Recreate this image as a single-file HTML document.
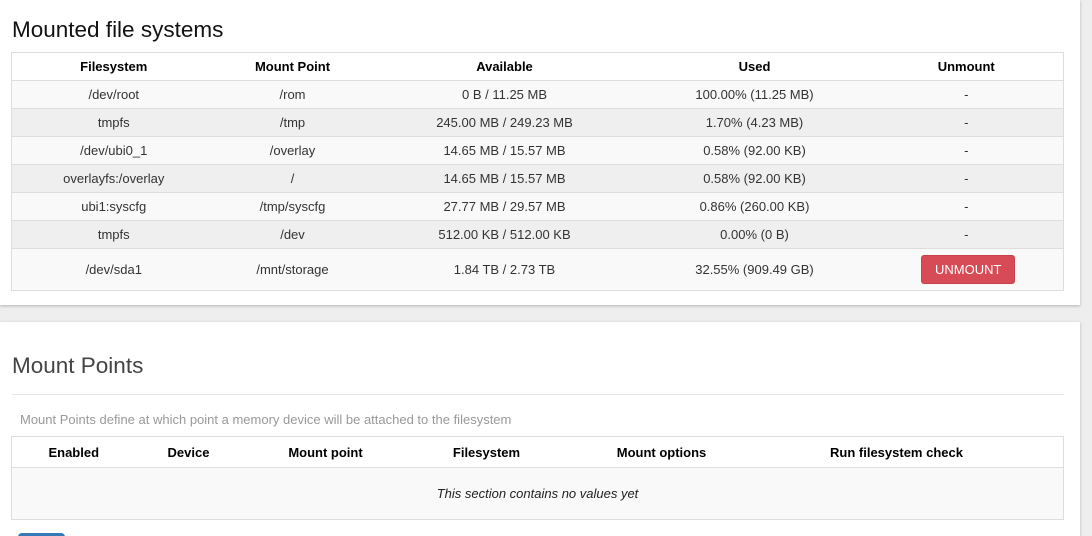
<!DOCTYPE html>
<html style="overflow:hidden;height:536px"><head><style>
*{box-sizing:border-box;margin:0;padding:0}
body{width:1092px;height:536px;overflow:hidden;background:#eee;font-family:"Liberation Sans",sans-serif;font-size:13px;color:#333;position:relative}
.card{position:absolute;left:0;width:1080px;background:#fff;box-shadow:0 1px 3px rgba(0,0,0,.25)}
h2{position:absolute;font-weight:normal}
table{position:absolute;left:11px;width:1053px;border-collapse:collapse;border:1px solid #ddd;table-layout:fixed}
td,th{text-align:center;padding:0;border-top:1px solid #ddd}
th{font-weight:bold;color:#000}
.t1 tr{height:28px}
.t1 tr:nth-child(even){background:#f9f9f9}
.t1 tr:nth-child(odd){background:#efefef}
.t1 tr:first-child{background:#fff}
.btn{display:inline-block;background:#d64b55;color:#fff;border:1px solid #c9404a;border-radius:3px;padding:6px 13px;font-size:13px;margin-left:4px}
</style></head><body>
<div class="card" style="top:0;height:305px">
<h2 style="left:12px;top:17px;font-size:22.5px;color:#111">Mounted file systems</h2>
<table class="t1" style="top:52px">
<colgroup><col style="width:204px"><col style="width:154px"><col style="width:270px"><col style="width:230px"><col></colgroup>
<tr><th>Filesystem</th><th>Mount Point</th><th>Available</th><th>Used</th><th>Unmount</th></tr>
<tr><td>/dev/root</td><td>/rom</td><td>0 B / 11.25 MB</td><td>100.00% (11.25 MB)</td><td>-</td></tr>
<tr><td>tmpfs</td><td>/tmp</td><td>245.00 MB / 249.23 MB</td><td>1.70% (4.23 MB)</td><td>-</td></tr>
<tr><td>/dev/ubi0_1</td><td>/overlay</td><td>14.65 MB / 15.57 MB</td><td>0.58% (92.00 KB)</td><td>-</td></tr>
<tr><td>overlayfs:/overlay</td><td>/</td><td>14.65 MB / 15.57 MB</td><td>0.58% (92.00 KB)</td><td>-</td></tr>
<tr><td>ubi1:syscfg</td><td>/tmp/syscfg</td><td>27.77 MB / 29.57 MB</td><td>0.86% (260.00 KB)</td><td>-</td></tr>
<tr><td>tmpfs</td><td>/dev</td><td>512.00 KB / 512.00 KB</td><td>0.00% (0 B)</td><td>-</td></tr>
<tr style="height:42px;background:#f9f9f9"><td>/dev/sda1</td><td>/mnt/storage</td><td>1.84 TB / 2.73 TB</td><td>32.55% (909.49 GB)</td><td><span class="btn">UNMOUNT</span></td></tr>
</table>
</div>
<div class="card" style="top:322px;height:214px">
<h2 style="left:12px;top:31px;font-size:22.5px;color:#444">Mount Points</h2>
<div style="position:absolute;left:12px;top:72px;width:1052px;border-top:1px solid #e5e5e5"></div>
<div style="position:absolute;left:20px;top:90px;color:#999">Mount Points define at which point a memory device will be attached to the filesystem</div>
<table style="top:114px">
<colgroup><col style="width:124px"><col style="width:106px"><col style="width:168px"><col style="width:154px"><col style="width:196px"><col style="width:274px"><col></colgroup>
<tr style="height:31px"><th>Enabled</th><th>Device</th><th>Mount point</th><th>Filesystem</th><th>Mount options</th><th>Run filesystem check</th><th></th></tr>
<tr style="height:52px;background:#f9f9f9"><td colspan="7" style="font-style:italic;color:#222">This section contains no values yet</td></tr>
</table>
<div style="position:absolute;left:18px;top:211px;width:47px;height:20px;background:#337ab7;border-radius:4px"></div>
</div>
</body></html>
